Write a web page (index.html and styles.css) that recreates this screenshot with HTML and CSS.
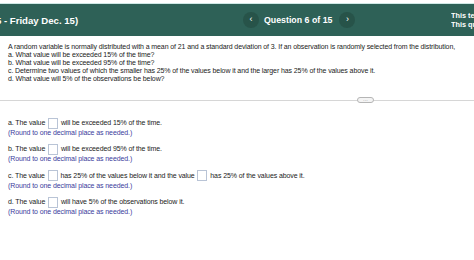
FILE: index.html
```html
<!DOCTYPE html>
<html lang="en">
<head>
    <meta charset="UTF-8">
    <title>Question 6 of 15</title>
    <link rel="stylesheet" href="styles.css">
</head>
<body>
    <div class="topbar">
        <div class="title">5 - Friday Dec. 15)</div>
        <div class="nav">
            <span class="nav-btn">&lsaquo;</span>
            <span class="nav-label">Question 6 of 15</span>
            <span class="nav-btn">&rsaquo;</span>
        </div>
        <div class="info">
            <div>This test</div>
            <div>This question</div>
        </div>
    </div>

    <div class="question">
        <p>A random variable is normally distributed with a mean of 21 and a standard deviation of 3. If an observation is randomly selected from the distribution,</p>
        <p>a. What value will be exceeded 15% of the time?</p>
        <p>b. What value will be exceeded 95% of the time?</p>
        <p>c. Determine two values of which the smaller has 25% of the values below it and the larger has 25% of the values above it.</p>
        <p>d. What value will 5% of the observations be below?</p>
    </div>

    <div class="divider"><span class="pill">&middot;&middot;&middot;</span></div>

    <div class="answers">
        <div class="answer">
            <p>a. The value <span class="box"></span> will be exceeded 15% of the time.</p>
            <p class="hint">(Round to one decimal place as needed.)</p>
        </div>
        <div class="answer">
            <p>b. The value <span class="box"></span> will be exceeded 95% of the time.</p>
            <p class="hint">(Round to one decimal place as needed.)</p>
        </div>
        <div class="answer">
            <p>c. The value <span class="box"></span> has 25% of the values below it and the value <span class="box"></span> has 25% of the values above it.</p>
            <p class="hint">(Round to one decimal place as needed.)</p>
        </div>
        <div class="answer">
            <p>d. The value <span class="box"></span> will have 5% of the observations below it.</p>
            <p class="hint">(Round to one decimal place as needed.)</p>
        </div>
    </div>
</body>
</html>
```
FILE: styles.css
```css
body {
    font-family: "Liberation Sans", Arial, sans-serif;
    margin: 0;
    color: #222;
    background: #fff;
    overflow: hidden;
}
p {
    margin: 0;
}
.topbar {
    display: flex;
    align-items: center;
    height: 33px;
    margin-top: 3px;
    background-color: #2e6157;
    color: #fff;
    border-top: 1px solid #cfe9e6;
    box-sizing: border-box;
    white-space: nowrap;
}
.title {
    font-size: 9.6px;
    font-weight: bold;
    margin-left: -4px;
    width: 247px;
}
.nav {
    display: flex;
    align-items: center;
    gap: 5px;
    width: 208px;
}
.nav-btn {
    width: 16px;
    height: 16px;
    border-radius: 50%;
    background-color: #275349;
    font-size: 9px;
    line-height: 15px;
    text-align: center;
}
.nav-label {
    font-size: 8.8px;
    font-weight: bold;
    margin: 0 2px 0 0;
}
.info {
    font-size: 7.3px;
    font-weight: bold;
    line-height: 9px;
    overflow: hidden;
    flex: 1;
}
.question {
    padding: 7px 8px 0;
    font-size: 7px;
    letter-spacing: -0.1px;
    line-height: 8px;
    white-space: nowrap;
}
.divider {
    position: relative;
    height: 1px;
    margin: 17px 0 0;
    background-color: #d6d6d6;
}
.pill {
    position: absolute;
    left: 357px;
    top: -3px;
    width: 17px;
    height: 6px;
    border: 1px solid #b5b5b5;
    border-radius: 3px;
    background: #f4f4f4;
    font-size: 5px;
    line-height: 5px;
    text-align: center;
    color: #888;
    box-sizing: border-box;
}
.answers {
    padding: 17px 8px 0;
    font-size: 7px;
    letter-spacing: -0.1px;
    line-height: 10px;
    white-space: nowrap;
}
.answer {
    margin-bottom: 6.4px;
}
.answer p:first-child {
    height: 10px;
}
.box {
    display: inline-block;
    width: 8px;
    height: 9px;
    border: 1px solid #b9c4d6;
    vertical-align: middle;
    margin: -1px 1px;
}
.hint {
    color: #3b3b9c;
}
```
